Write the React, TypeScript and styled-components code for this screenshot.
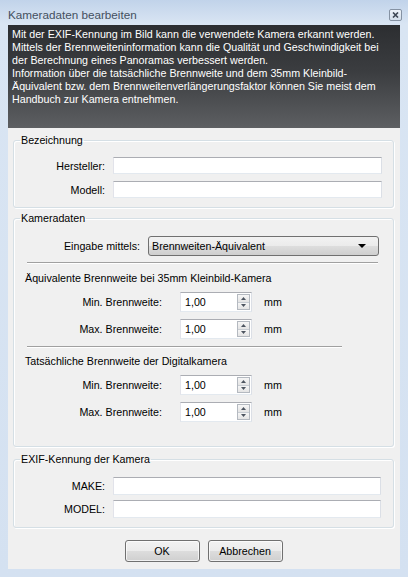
import styled, { createGlobalStyle } from "styled-components";

const GlobalStyle = createGlobalStyle`
  html, body {
    margin: 0;
    padding: 0;
  }
  body {
    width: 408px;
    height: 577px;
    overflow: hidden;
    font-family: "Liberation Sans", Arial, sans-serif;
    font-size: 10.7px;
    color: #000;
  }
`;

const Window = styled.div`
  width: 408px;
  height: 577px;
  box-sizing: border-box;
  display: flex;
  flex-direction: column;
  padding: 0 8px 8px;
  background: linear-gradient(#c1d3ea 0px, #d9e5f3 24px, #d4e1f1 100%);
`;

const TitleBar = styled.div`
  height: 25px;
  box-sizing: border-box;
  padding-top: 5px;
  display: flex;
  align-items: center;
  justify-content: space-between;
`;

const Title = styled.span`
  font-size: 11.7px;
  color: #44505f;
  line-height: 16px;
`;

const CloseButton = styled.div`
  width: 13px;
  height: 12px;
  box-sizing: border-box;
  margin-right: -2px;
  border: 1px solid #8592a3;
  border-radius: 2px;
  background: linear-gradient(#eef3f9, #d3deea);
  display: flex;
  align-items: center;
  justify-content: center;
`;

const InfoPanel = styled.div`
  height: 103px;
  box-sizing: border-box;
  padding: 3px 4px;
  background: linear-gradient(#2c2e31 0%, #3b3d40 45%, #5d5f62 100%);
  color: #fff;
  line-height: 13px;
  white-space: nowrap;
`;

const Content = styled.div`
  flex: 1;
  background: #f0f0f0;
  padding: 0 6px 0 5px;
  display: flex;
  flex-direction: column;
`;

const Group = styled.fieldset<{ $top: number }>`
  margin: ${(p) => p.$top}px 0 0;
  padding: 0;
  min-width: 0;
  border: 1px solid #d5dfe5;
  border-radius: 3px;
  box-shadow: inset 1px 1px 0 #fff, 1px 1px 0 #fff;
`;

const Legend = styled.legend`
  margin-left: 6px;
  padding: 0 1px;
  line-height: 14px;
`;

const FormGrid = styled.div<{ $pad: string; $gap: number }>`
  display: grid;
  grid-template-columns: 91px 1fr;
  column-gap: 8px;
  row-gap: ${(p) => p.$gap}px;
  align-items: center;
  padding: ${(p) => p.$pad};
`;

const Label = styled.label`
  text-align: right;
  white-space: nowrap;
`;

const TextInput = styled.div<{ $h: number }>`
  height: ${(p) => p.$h}px;
  box-sizing: border-box;
  background: #fff;
  border: 1px solid;
  border-color: #abadb3 #dbdfe6 #e3e9ef #e2e3ea;
`;

const CameraBody = styled.div`
  padding: 11px 0 24px;
  display: flex;
  flex-direction: column;
`;

const ComboRow = styled.div`
  display: flex;
  align-items: center;
  gap: 8px;
`;

const ComboLabel = styled.span`
  width: 126px;
  text-align: right;
`;

const Combo = styled.div`
  width: 231px;
  height: 20px;
  box-sizing: border-box;
  border: 1px solid #707070;
  border-radius: 3px;
  background: linear-gradient(#f2f2f2 0%, #ebebeb 50%, #dddddd 50%, #cfcfcf 100%);
  display: flex;
  align-items: center;
  justify-content: space-between;
  padding: 0 12px 0 3px;
`;

const Separator = styled.div<{ $width: number; $top: number }>`
  width: ${(p) => p.$width}px;
  margin: ${(p) => p.$top}px 0 0 13px;
  border-top: 1px solid #a0a0a0;
  border-bottom: 1px solid #fff;
`;

const SubHeading = styled.div<{ $top: number }>`
  margin-top: ${(p) => p.$top}px;
  padding-left: 11px;
  line-height: 14px;
`;

const SpinRow = styled.div`
  display: flex;
  align-items: center;
  margin-top: 7px;
`;

const SpinLabel = styled.span`
  width: 148px;
  text-align: right;
`;

const SpinBox = styled.div`
  width: 72px;
  height: 20px;
  margin-left: 18px;
  box-sizing: border-box;
  background: #fff;
  border: 1px solid;
  border-color: #abadb3 #dbdfe6 #e3e9ef #e2e3ea;
  display: flex;
  align-items: center;
  justify-content: space-between;
  padding: 1px 1px 1px 4px;
`;

const SpinButtons = styled.div`
  width: 13px;
  height: 16px;
  box-sizing: border-box;
  border: 1px solid #b4b9c0;
  display: flex;
  flex-direction: column;
`;

const SpinHalf = styled.div<{ $down?: boolean }>`
  flex: 1;
  display: flex;
  align-items: center;
  justify-content: center;
  background: linear-gradient(#f6f6f6, #e4e4e4);
  border-top: ${(p) => (p.$down ? "1px solid #c8cdd3" : "none")};
`;

const Unit = styled.span`
  margin-left: 12px;
`;

const ButtonRow = styled.div`
  display: flex;
  justify-content: center;
  gap: 8px;
  margin-top: 12px;
`;

const Button = styled.button`
  width: 75px;
  height: 22px;
  box-sizing: border-box;
  padding: 0;
  font: inherit;
  color: #000;
  border: 1px solid #707070;
  border-radius: 3px;
  background: linear-gradient(#f2f2f2 0%, #ebebeb 50%, #dddddd 50%, #cfcfcf 100%);
  box-shadow: inset 0 0 0 1px rgba(255, 255, 255, 0.7);
`;

const Arrow = ({ up }: { up?: boolean }) => (
  <svg width="5" height="3" viewBox="0 0 5 3">
    <path d={up ? "M2.5 0 L5 3 L0 3 Z" : "M0 0 L5 0 L2.5 3 Z"} fill="#4d5560" />
  </svg>
);

const Spin = ({ label }: { label: string }) => (
  <SpinRow>
    <SpinLabel>{label}</SpinLabel>
    <SpinBox>
      <span>1,00</span>
      <SpinButtons>
        <SpinHalf>
          <Arrow up />
        </SpinHalf>
        <SpinHalf $down>
          <Arrow />
        </SpinHalf>
      </SpinButtons>
    </SpinBox>
    <Unit>mm</Unit>
  </SpinRow>
);

export default function App() {
  return (
    <>
      <GlobalStyle />
      <Window>
        <TitleBar>
          <Title>Kameradaten bearbeiten</Title>
          <CloseButton>
            <svg width="7" height="6" viewBox="0 0 7 6">
              <path d="M1 0.5 L6 5.5 M6 0.5 L1 5.5" stroke="#3d4653" strokeWidth="1.6" />
            </svg>
          </CloseButton>
        </TitleBar>
        <InfoPanel>
          Mit der EXIF-Kennung im Bild kann die verwendete Kamera erkannt werden.
          <br />
          Mittels der Brennweiteninformation kann die Qualität und Geschwindigkeit bei
          <br />
          der Berechnung eines Panoramas verbessert werden.
          <br />
          Information über die tatsächliche Brennweite und dem 35mm Kleinbild-
          <br />
          Äquivalent bzw. dem Brennweitenverlängerungsfaktor können Sie meist dem
          <br />
          Handbuch zur Kamera entnehmen.
        </InfoPanel>
        <Content>
          <Group $top={5}>
            <Legend>Bezeichnung</Legend>
            <FormGrid $pad="10px 11px 9px 0" $gap={7}>
              <Label>Hersteller:</Label>
              <TextInput $h={17} />
              <Label>Modell:</Label>
              <TextInput $h={17} />
            </FormGrid>
          </Group>

          <Group $top={3}>
            <Legend>Kameradaten</Legend>
            <CameraBody>
              <ComboRow>
                <ComboLabel>Eingabe mittels:</ComboLabel>
                <Combo>
                  <span>Brennweiten-Äquivalent</span>
                  <svg width="8" height="4" viewBox="0 0 8 4">
                    <path d="M0 0 L8 0 L4 4 Z" fill="#000" />
                  </svg>
                </Combo>
              </ComboRow>
              <Separator $width={351} $top={6} />
              <SubHeading $top={7}>
                Äquivalente Brennweite bei 35mm Kleinbild-Kamera
              </SubHeading>
              <Spin label="Min. Brennweite:" />
              <Spin label="Max. Brennweite:" />
              <Separator $width={315} $top={7} />
              <SubHeading $top={6}>Tatsächliche Brennweite der Digitalkamera</SubHeading>
              <Spin label="Min. Brennweite:" />
              <Spin label="Max. Brennweite:" />
            </CameraBody>
          </Group>

          <Group $top={5}>
            <Legend>EXIF-Kennung der Kamera</Legend>
            <FormGrid $pad="11px 12px 9px 0" $gap={5}>
              <Label>MAKE:</Label>
              <TextInput $h={18} />
              <Label>MODEL:</Label>
              <TextInput $h={18} />
            </FormGrid>
          </Group>

          <ButtonRow>
            <Button>OK</Button>
            <Button>Abbrechen</Button>
          </ButtonRow>
        </Content>
      </Window>
    </>
  );
}
